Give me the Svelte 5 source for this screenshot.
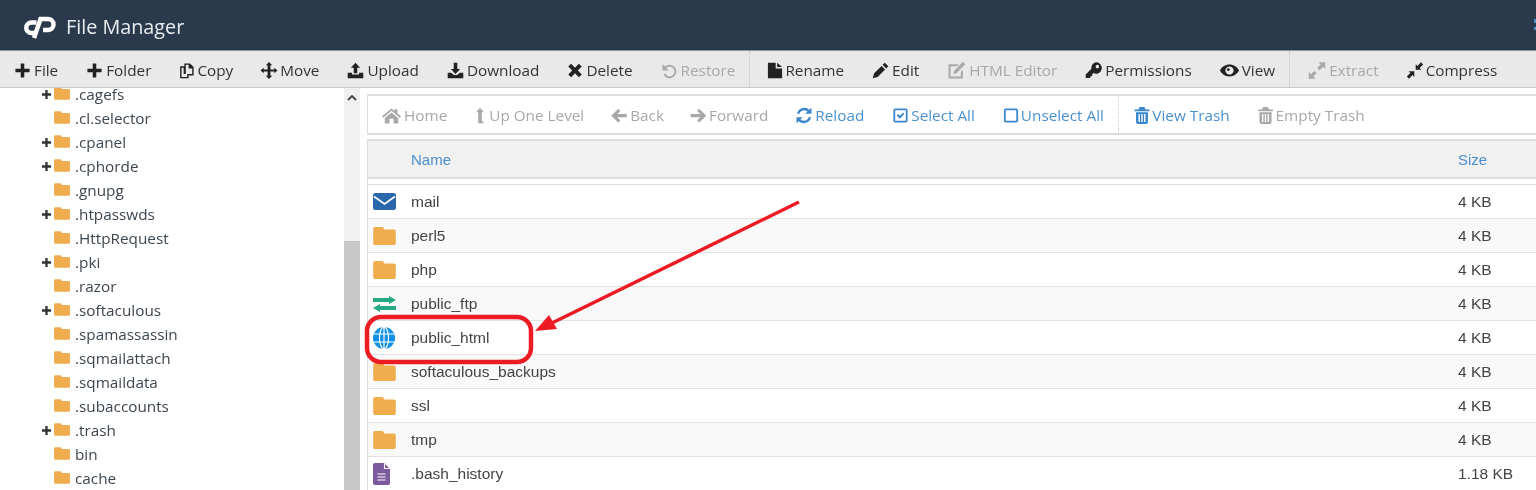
<script lang="ts">
	const icons: Record<string, string> = {
		plus: 'M9.500 2h5v7.500H22v5h-7.500V22h-5v-7.500H2v-5h7.500z',
		copy: 'M3 6h6V2h8l5 5v12h-7v4H3zM5 8h3v9h5v4H5zM11 4h4v5h5v8h-9z',
		move: 'M12 0l4.500 4.500H14v6h5.500V8l4.500 4-4.500 4v-2.500H14v6h2.500L12 24l-4.500-4.500H10v-6H4.500V16L0 12l4.500-4v2.500H10v-6H7.500z',
		upload: 'M12 1l6.500 7h-4v8h-5V8h-4zM1 15h6v2.500h10V15h6v8H1z',
		download: 'M9.500 1h5v9h4L12 17l-6.500-7h4zM1 15h5l3.500 3.500h5L18 15h5v8H1z',
		x: 'M6.500 2.500L12 8l5.500-5.500 4 4L16 12l5.500 5.500-4 4L12 16l-5.500 5.500-4-4L8 12 2.500 6.500z',
		restore: 'M2 3l3.500 3.500a9.500 9.500 0 1 1-2 11l2.500-1.200A6.800 6.800 0 1 0 7.500 8.500L11 12H2z',
		file: 'M2 1h11v8h9v14H2zM15 1l7 6h-7z',
		pencil: 'M18 1l5 5-3 3-5-5zM13.500 5.500l5 5L8 21l-7 2 2-7z',
		edit: 'M2 4h13l-2.500 2.500h-8v13h13v-6l2.500-2.500v11H2zM20 1l3 3L12 15.500l-4 1 1-4z',
		key: 'M15.500 0.500a8 8 0 1 1-3.600 15L10 17.500V20H7.500v2.500H1v-5l8-8a8 8 0 0 1 6.500-9zM17.500 4a2.500 2.500 0 1 0 .01 0z',
		eye: 'M12 4.500c5.500 0 10 3.200 12 7.500-2 4.300-6.500 7.500-12 7.500S2 16.300 0 12c2-4.300 6.500-7.500 12-7.500zM12 6.800a5.200 5.200 0 1 0 .01 0zM10.500 9a1.800 1.800 0 1 1-.01 0z',
		expand: 'M14 1h9v9l-3-3-4.500 4.500-3-3L17 4zM1 23v-9l3 3 4.500-4.500 3 3L7 20l3 3z',
		compress: 'M23.500 3.500L18.500 8.500 21 11h-8V3l2.500 2.500 5-5zM.500 20.500l5-5L3 13h8v8l-2.500-2.500-5 5z',
		home: 'M12 3l4 3.400V4h3.500v5.300l4.500 3.700-1.500 1.700L12 6 1.500 14.700 0 13zM3.500 15.200L12 8.300l8.500 6.900V22h-6v-6h-5v6h-6z',
		up: 'M12 1l5.500 6.500H14.500V18c0 1.800.8 2.800 2.500 2.800V23H9.500V7.500h-3z',
		back: 'M11 2.500l3 3-4.500 4.500H23v4.500H9.500l4.500 4.500-3 3L1 12.200z',
		forward: 'M13 2.500l10 9.700-10 9.800-3-3 4.500-4.500H1V10h13.500L10 5.500z',
		reload: 'M22.500 1v8.500H14l3-3A7 7 0 0 0 5.500 9.500H2a10.500 10.500 0 0 1 17.500-5.500zM1.500 23v-8.500H10l-3 3a7 7 0 0 0 11.500-3H22a10.500 10.500 0 0 1-17.500 5.500z',
		checked: 'M4.500 2h15A2.500 2.500 0 0 1 22 4.500v15a2.500 2.500 0 0 1-2.500 2.500h-15A2.500 2.500 0 0 1 2 19.500v-15A2.500 2.500 0 0 1 4.500 2zM4.500 4.500v15h15v-15zM6.500 12l2-2 2.500 2.500 4.500-4.500 2 2-6.500 6.500z',
		square: 'M4.500 2h15A2.500 2.500 0 0 1 22 4.500v15a2.500 2.500 0 0 1-2.500 2.500h-15A2.500 2.500 0 0 1 2 19.500v-15A2.500 2.500 0 0 1 4.500 2zM4.500 4.500v15h15v-15z',
		trash: 'M8.500 0h7l1.500 3.500h5.500V6H1.500V3.500H7zM3.500 7.500h17V21a3 3 0 0 1-3 3h-11a3 3 0 0 1-3-3zM7 10v11h2V10zM11 10v11h2V10zM15 10v11h2V10z'
	};

	type Tool = { icon: string; label: string; w: number; off?: boolean; sep?: boolean; link?: boolean };

	// w is the distance from icon start to label start
	const actions: Tool[] = [
		{ icon: 'plus', label: 'File', w: 20 },
		{ icon: 'plus', label: 'Folder', w: 20 },
		{ icon: 'copy', label: 'Copy', w: 18 },
		{ icon: 'move', label: 'Move', w: 19 },
		{ icon: 'upload', label: 'Upload', w: 20 },
		{ icon: 'download', label: 'Download', w: 20 },
		{ icon: 'x', label: 'Delete', w: 19 },
		{ icon: 'restore', label: 'Restore', w: 20, off: true },
		{ icon: 'file', label: 'Rename', w: 17, sep: true },
		{ icon: 'pencil', label: 'Edit', w: 20 },
		{ icon: 'edit', label: 'HTML Editor', w: 22, off: true },
		{ icon: 'key', label: 'Permissions', w: 20 },
		{ icon: 'eye', label: 'View', w: 22 },
		{ icon: 'expand', label: 'Extract', w: 21, off: true, sep: true },
		{ icon: 'compress', label: 'Compress', w: 19 }
	];

	const nav: Tool[] = [
		{ icon: 'home', label: 'Home', w: 22, off: true },
		{ icon: 'up', label: 'Up One Level', w: 15, off: true },
		{ icon: 'back', label: 'Back', w: 19, off: true },
		{ icon: 'forward', label: 'Forward', w: 18, off: true },
		{ icon: 'reload', label: 'Reload', w: 19, link: true },
		{ icon: 'checked', label: 'Select All', w: 18, link: true },
		{ icon: 'square', label: 'Unselect All', w: 17, link: true },
		{ icon: 'trash', label: 'View Trash', w: 17, link: true, sep: true },
		{ icon: 'trash', label: 'Empty Trash', w: 18, off: true }
	];

	const tree: [string, boolean][] = [
		['.cagefs', true],
		['.cl.selector', false],
		['.cpanel', true],
		['.cphorde', true],
		['.gnupg', false],
		['.htpasswds', true],
		['.HttpRequest', false],
		['.pki', true],
		['.razor', false],
		['.softaculous', true],
		['.spamassassin', false],
		['.sqmailattach', false],
		['.sqmaildata', false],
		['.subaccounts', false],
		['.trash', true],
		['bin', false],
		['cache', false]
	];

	const files = [
		{ name: 'mail', type: 'mail', size: '4 KB' },
		{ name: 'perl5', type: 'folder', size: '4 KB' },
		{ name: 'php', type: 'folder', size: '4 KB' },
		{ name: 'public_ftp', type: 'ftp', size: '4 KB' },
		{ name: 'public_html', type: 'globe', size: '4 KB' },
		{ name: 'softaculous_backups', type: 'folder', size: '4 KB' },
		{ name: 'ssl', type: 'folder', size: '4 KB' },
		{ name: 'tmp', type: 'folder', size: '4 KB' },
		{ name: '.bash_history', type: 'doc', size: '1.18 KB' }
	];

	const folderPath =
		'M2 1.500h6.500c1 0 1.500.5 1.800 1.500l.4 1H20c1.200 0 2 .8 2 2v11c0 1.200-.8 2-2 2H2c-1.200 0-2-.8-2-2V3.500c0-1.200.8-2 2-2z';
</script>

<div class="page">
	<header class="topbar">
		<svg class="logo" viewBox="0 0 33 25" aria-hidden="true">
			<path d="M13.500 7.500H8.500a5.200 5.200 0 0 0 0 10.500H11" />
			<path d="M11 23L17.500 4H25a5.500 5.500 0 0 1 0 11H20" />
		</svg>
		<h1>File Manager</h1>
		<svg class="edge" viewBox="0 0 2 12" aria-hidden="true"><path d="M0 0h2v4H0zM0 8h2v3H0z" /></svg>
	</header>

	<nav class="actions">
		{#each actions as tool}
			<button class="tool" class:off={tool.off} class:sep={tool.sep}>
				<svg viewBox="0 0 24 24" preserveAspectRatio="xMidYMid slice" style="width: {tool.w - 3}px" aria-hidden="true">
					<path d={icons[tool.icon]} fill-rule="evenodd" />
				</svg>
				{tool.label}
			</button>
		{/each}
	</nav>

	<div class="main">
		<aside class="side">
			<ul class="tree">
				{#each tree as [name, open]}
					<li>
						<span class="toggle">
							{#if open}
								<svg viewBox="0 0 24 24" aria-hidden="true"><path d={icons.plus} /></svg>
							{/if}
						</span>
						<svg class="folder" viewBox="0 1.500 22 17.500" aria-hidden="true"><path d={folderPath} /></svg>
						{name}
					</li>
				{/each}
			</ul>
			<div class="scroll">
				<svg class="caret" viewBox="0 0 10 6" aria-hidden="true"><path d="M1 5l4-4 4 4" /></svg>
				<div class="thumb"></div>
			</div>
		</aside>

		<section class="content">
			<div class="nav">
				{#each nav as tool}
					<button class="tool" class:off={tool.off} class:sep={tool.sep} class:link={tool.link}>
						<svg viewBox="0 0 24 24" preserveAspectRatio="xMidYMid slice" style="width: {tool.w - 3}px" aria-hidden="true">
							<path d={icons[tool.icon]} fill-rule="evenodd" />
						</svg>
						{tool.label}
					</button>
				{/each}
			</div>

			<div class="thead">
				<span class="cell-name">Name</span>
				<span class="cell-size">Size</span>
			</div>
			<div class="spacer"></div>

			{#each files as file}
				<div class="row">
					<span class="type">
						{#if file.type === 'folder'}
							<svg class="t-folder" viewBox="0 1.500 22 17.500" aria-hidden="true"><path d={folderPath} /></svg>
						{:else if file.type === 'mail'}
							<svg class="t-mail" viewBox="0 0 23 17" aria-hidden="true">
								<rect width="23" height="17" rx="2.500" fill="#2a67ab" />
								<path d="M1 3.500l10.500 7.500L22 3.500" fill="none" stroke="#fff" stroke-width="1.600" />
							</svg>
						{:else if file.type === 'ftp'}
							<svg class="t-ftp" viewBox="0 0 23 16" aria-hidden="true">
								<path d="M0 2h16V0l7 4-7 4V6H0zM23 10H7V8l-7 4 7 4v-2h16z" />
							</svg>
						{:else if file.type === 'globe'}
							<svg class="t-globe" viewBox="0 0 22 22" aria-hidden="true">
								<circle cx="11" cy="11" r="11" fill="#0f8fe6" />
								<g fill="none" stroke="#fff" stroke-width="1.200">
									<ellipse cx="11" cy="11" rx="4.500" ry="11" />
									<path d="M11 0v22M1 7h20M1 15h20" />
								</g>
							</svg>
						{:else}
							<svg class="t-doc" viewBox="0 0 17 22" aria-hidden="true">
								<path d="M2 0h9l6 6v14a2 2 0 0 1-2 2H2a2 2 0 0 1-2-2V2a2 2 0 0 1 2-2z" fill="#7d5a9e" />
								<path d="M11.500.5v5h5M4.500 11h8M4.500 14h8M4.500 17h8" fill="none" stroke="#fff" stroke-width="1.100" />
							</svg>
						{/if}
					</span>
					<span class="cell-name">{file.name}</span>
					<span class="cell-size">{file.size}</span>
				</div>
			{/each}
		</section>
	</div>

	<svg class="markup" viewBox="0 0 1536 490" aria-hidden="true">
		<rect x="367" y="317" width="164" height="45" rx="14" fill="none" stroke="#ed1c24" stroke-width="4.500" />
		<path d="M799 202L552 323" fill="none" stroke="#ed1c24" stroke-width="3.500" />
		<path d="M535 331L549 315L557 329z" fill="#ed1c24" />
	</svg>
</div>

<style>
	:global(body) {
		margin: 0;
		background: #fff;
	}

	.page {
		position: relative;
		width: 1536px;
		height: 490px;
		overflow: hidden;
		background: #fff;
		font-family: 'Open Sans', sans-serif;
		color: #333;
		filter: blur(0.45px);
	}

	.topbar {
		display: flex;
		align-items: center;
		height: 50px;
		padding-left: 23px;
		background: #2a394b;
		border-bottom: 1px solid #8b95a0;
		color: #e9edf0;
	}

	.logo {
		width: 33px;
		height: 25px;
		margin-top: 4px;
		fill: none;
		stroke: #fff;
		stroke-width: 4.500;
	}

	h1 {
		margin: 2px 0 0 10px;
		font-size: 19.800px;
		font-weight: 400;
	}

	.edge {
		width: 2px;
		height: 12px;
		margin-left: auto;
		fill: #4a90c0;
	}

	.actions {
		display: flex;
		align-items: center;
		height: 36px;
		background: #e9e9e9;
		border-bottom: 1px solid #c9c9c9;
	}

	.tool {
		display: flex;
		align-items: center;
		gap: 3px;
		height: 100%;
		padding: 0 14px;
		border: 0;
		background: none;
		font: inherit;
		font-size: 15.300px;
		color: #333;
		white-space: nowrap;
	}

	.actions .tool {
		padding-top: 2px;
	}

	.actions .tool.sep {
		padding-left: 18px;
	}

	.tool svg {
		height: 17px;
		overflow: visible;
		fill: #222;
		flex: none;
	}

	.tool.off,
	.tool.off svg {
		color: #a8a8a8;
		fill: #a8a8a8;
	}

	.tool.link {
		color: #4a90d0;
	}

	.tool.link svg {
		fill: #3a87cb;
	}

	.tool.sep {
		border-left: 1px dotted #c4c4c4;
	}

	.main {
		display: flex;
		height: 402px;
	}

	.side {
		display: flex;
		flex: none;
		width: 360px;
		overflow: hidden;
	}

	.tree {
		flex: 1;
		margin: -6px 0 0;
		padding: 0 0 0 41px;
		list-style: none;
		font-size: 15.300px;
		color: #3d4650;
	}

	.tree li {
		display: flex;
		align-items: center;
		height: 24px;
		white-space: nowrap;
	}

	.toggle {
		display: flex;
		width: 13px;
		flex: none;
	}

	.toggle svg {
		width: 11px;
		height: 11px;
		fill: #333;
	}

	.folder {
		flex: none;
		width: 16px;
		height: 13px;
		margin-right: 5px;
		margin-top: -2px;
		fill: #f0ad4e;
	}

	.scroll {
		display: flex;
		flex-direction: column;
		flex: none;
		width: 16px;
		background: #f1f1f1;
	}

	.caret {
		width: 10px;
		height: 6px;
		margin: 7px auto 0;
		fill: none;
		stroke: #444;
		stroke-width: 1.800;
	}

	.thumb {
		width: 16px;
		margin-top: 140px;
		flex: 1;
		background: #c8c8c8;
	}

	.content {
		flex: 1;
		margin: 6px 0 0 7px;
		min-width: 0;
		font-family: 'Liberation Sans', sans-serif;
		font-size: 15.500px;
	}

	.nav {
		display: flex;
		align-items: center;
		height: 37px;
		border: 1px solid #dcdcdc;
		border-top-width: 2px;
		border-right: 0;
		border-bottom: 2px solid #ddd;
		font-family: 'Open Sans', sans-serif;
	}

	.nav .tool {
		padding: 1px 13.500px 0;
	}

	.nav .tool.link {
		padding: 1px 14.500px 0;
	}

	.nav .tool:first-child {
		padding-left: 14px;
	}

	.nav .tool.sep {
		padding-left: 16px;
	}

	.thead,
	.row {
		display: flex;
		align-items: center;
	}

	.thead {
		height: 35px;
		margin-top: 4px;
		padding-top: 1px;
		box-sizing: content-box;
		margin-bottom: -1px;
		background: #f1f1f1;
		border-top: 2px solid #ddd;
		border-bottom: 2px solid #ddd;
		border-left: 1px solid #ddd;
		color: #4a90d0;
		font-size: 15px;
	}

	.spacer {
		height: 6px;
		border-bottom: 1px solid #ddd;
		border-left: 1px solid #ddd;
	}

	.row {
		height: 33px;
		border-bottom: 1px solid #e2e2e2;
		border-left: 1px solid #ddd;
		color: #444;
	}

	.row:nth-of-type(odd) {
		background: #f9f9f9;
	}

	.type {
		display: flex;
		align-items: center;
		width: 28px;
		padding-left: 5px;
		flex: none;
	}

	.cell-name {
		flex: 1;
		margin-left: 10px;
	}

	.thead .cell-name {
		margin-left: 43px;
	}

	.cell-size {
		flex: none;
		width: 78px;
	}

	.t-folder {
		width: 23px;
		height: 18px;
		fill: #f0ad4e;
	}

	.t-mail {
		width: 23px;
		height: 17px;
	}

	.t-ftp {
		width: 23px;
		height: 16px;
		fill: #26a884;
	}

	.t-globe {
		width: 22px;
		height: 22px;
	}

	.t-doc {
		width: 17px;
		height: 22px;
	}

	.markup {
		position: absolute;
		inset: 0;
		width: 1536px;
		height: 490px;
		pointer-events: none;
	}
</style>
